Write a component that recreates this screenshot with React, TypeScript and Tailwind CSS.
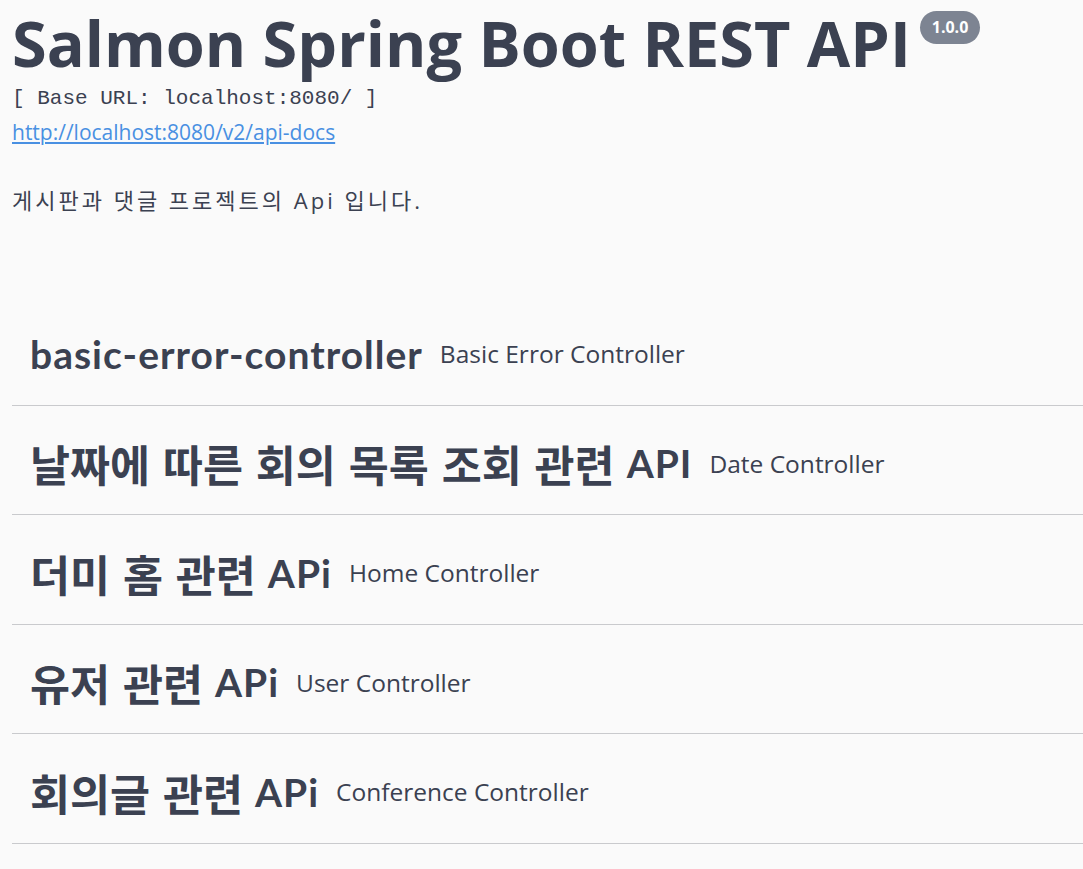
import React from "react";

type Tag = { ko?: string; en: string; desc: string };

const tags: Tag[] = [
  { en: "basic-error-controller", desc: "Basic Error Controller" },
  { ko: "날짜에 따른 회의 목록 조회 관련", en: "API", desc: "Date Controller" },
  { ko: "더미 홈 관련", en: "APi", desc: "Home Controller" },
  { ko: "유저 관련", en: "APi", desc: "User Controller" },
  { ko: "회의글 관련", en: "APi", desc: "Conference Controller" },
];

const sans = "font-['Open_Sans','Noto_Sans_CJK_KR',sans-serif]";

function TagRow({ tag }: { tag: Tag }) {
  return (
    <div className="flex items-center h-[101.5px] mb-2 pl-[18px] border-b border-[#c9cacd] whitespace-nowrap">
      {tag.ko && (
        <span className="font-['Noto_Sans_CJK_KR',sans-serif] font-bold text-[43.5px] leading-none [word-spacing:3px] mr-[12px]">
          {tag.ko}
        </span>
      )}
      <span className="font-['Lato','Noto_Sans_CJK_KR',sans-serif] font-bold text-[39px] leading-none tracking-[1px]">
        {tag.en}
      </span>
      <span className="ml-[17px] text-[24.5px] leading-none">{tag.desc}</span>
    </div>
  );
}

export default function App() {
  return (
    <div className={`min-h-screen bg-[#fafafa] pl-3 text-[#3b4151] overflow-hidden ${sans}`}>
      {/* Info block */}
      <div>
        <h2 className="flex items-start text-[63px] font-bold leading-[86px] whitespace-nowrap">
          Salmon Spring Boot REST API
          <span className="ml-[9px] mt-[11px] h-[33px] px-[12px] rounded-full bg-[#7d8492] text-white text-[16px] font-bold leading-[33px]">
            1.0.0
          </span>
        </h2>
        <div className="font-['Liberation_Mono',monospace] text-[21px] leading-[28px] -mt-[1px]">
          [ Base URL: localhost:8080/ ]
        </div>
        <a href="#" className="block w-fit text-[21px] leading-[32px] mt-[3px] text-[#4990e2] underline">
          http://localhost:8080/v2/api-docs
        </a>
        <p className="text-[22px] leading-[32px] tracking-[3px] mt-[36px]">게시판과 댓글 프로젝트의 Api 입니다.</p>
      </div>

      {/* Tags */}
      <div className="mt-[88px] flex flex-col">
        {tags.map((t) => (
          <TagRow key={t.desc} tag={t} />
        ))}
      </div>
    </div>
  );
}
